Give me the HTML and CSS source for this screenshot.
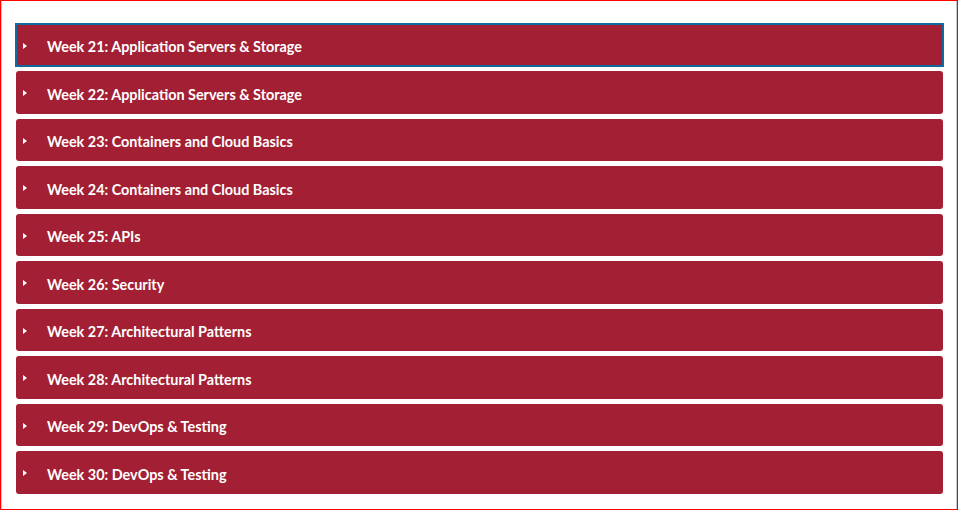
FILE: index.html
```html
<!DOCTYPE html>
<html lang="en">
<head>
<meta charset="utf-8">
<title>Weeks</title>
<link rel="stylesheet" href="styles.css">
</head>
<body>
<div class="frame">
  <div class="inner">
    <div class="list">
      <div class="item focused"><span class="caret"></span><span class="label">Week 21: Application Servers &amp; Storage</span></div>
      <div class="item"><span class="caret"></span><span class="label">Week 22: Application Servers &amp; Storage</span></div>
      <div class="item"><span class="caret"></span><span class="label">Week 23: Containers and Cloud Basics</span></div>
      <div class="item"><span class="caret"></span><span class="label">Week 24: Containers and Cloud Basics</span></div>
      <div class="item"><span class="caret"></span><span class="label">Week 25: APIs</span></div>
      <div class="item"><span class="caret"></span><span class="label">Week 26: Security</span></div>
      <div class="item"><span class="caret"></span><span class="label">Week 27: Architectural Patterns</span></div>
      <div class="item"><span class="caret"></span><span class="label">Week 28: Architectural Patterns</span></div>
      <div class="item"><span class="caret"></span><span class="label">Week 29: DevOps &amp; Testing</span></div>
      <div class="item"><span class="caret"></span><span class="label">Week 30: DevOps &amp; Testing</span></div>
    </div>
  </div>
</div>
</body>
</html>
```
FILE: styles.css
```css
html, body {
  margin: 0;
  padding: 0;
  background: #fff;
}
.frame {
  width: 958px;
  height: 510px;
  box-sizing: border-box;
  border: 1px solid #ff0000;
}
.inner {
  height: 100%;
  box-sizing: border-box;
  border-left: 1px solid #c8c8c8;
  border-right: 1px solid #c8c8c8;
  padding: 22.5px 13px 0 14px;
}
.list {
  display: flex;
  flex-direction: column;
  gap: 5px;
}
.item {
  height: 42.5px;
  background: #a31f34;
  border-radius: 3px;
  display: flex;
  align-items: center;
  padding-left: 7px;
  color: #fff;
  font-family: Lato, "Noto Sans", sans-serif;
  font-weight: 700;
  font-size: 14.4px;
}
.item.focused {
  outline: 2px solid #106a9c;
  outline-offset: -1px;
  border-radius: 0;
}
.caret {
  width: 0;
  height: 0;
  border-top: 3.5px solid transparent;
  border-bottom: 3.5px solid transparent;
  border-left: 4px solid #fff;
  margin-top: 2px;
  margin-right: 20px;
}
.label {
  line-height: 20px;
  padding-top: 5px;
}
```
